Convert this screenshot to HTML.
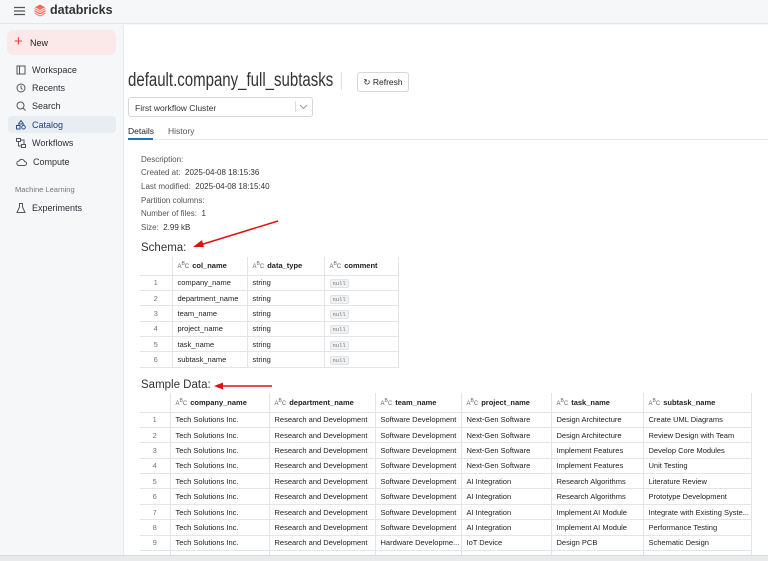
<!DOCTYPE html>
<html><head><meta charset="utf-8"><style>
*{box-sizing:border-box;margin:0;padding:0}
html,body{width:768px;height:561px;overflow:hidden}
body{background:#f6f7f9;font-family:"Liberation Sans",sans-serif;color:#1f2937;position:relative;font-size:9px}
.abs{position:absolute}
.top{left:0;top:0;width:768px;height:24px;background:#f6f7f9;border-bottom:1px solid #e3e5e8}
.main{left:123px;top:25px;width:645px;height:530px;background:#fff;border-left:1px solid #e6e8eb}
.nav{left:8px;height:17px;width:108px;display:flex;align-items:center;padding-left:8px;font-size:9px;color:#2b2f36}
.nav svg{margin-right:6px}
.sel{background:#e8edf4;border-radius:4px;color:#1f3f6b}
table{border-collapse:collapse;position:absolute;font-size:7.5px;color:#222}
td,th{border:1px solid #e3e5e8;padding:0 5px;white-space:nowrap;overflow:hidden;text-align:left;font-weight:normal}
th{font-weight:bold;height:18px;border-top:none}
tr{height:15.4px}
td.n{text-align:center;color:#777;border-left:none}
th.n{border-left:none}
.ac{font-size:6px;color:#666;font-weight:normal;margin-right:3px}
.null{font-family:"Liberation Mono",monospace;font-size:5.5px;background:#f0f1f3;border:1px solid #e2e3e6;border-radius:2px;padding:0 2px;color:#777}
.meta{left:141px;font-size:8px;color:#555}
.meta b{font-weight:normal;color:#333}
.clip{left:0;top:0;width:768px;height:555px;overflow:hidden}
</style></head><body>
<div class="abs top"></div>
<svg class="abs" style="left:14px;top:6px" width="11" height="10"><path d="M0 1.5H11M0 5H11M0 8.5H11" stroke="#555" stroke-width="1.2"/></svg>
<svg class="abs" style="left:34px;top:4px" width="12" height="13" viewBox="0 0 12 13"><path d="M6 0.5L11.5 3.5V9.5L6 12.5L0.5 9.5V3.5Z" fill="#f36a5a"/><path d="M0.5 5.5L6 8.5L11.5 5.5M0.5 8L6 11L11.5 8M0.5 3.5L6 6.5L11.5 3.5" stroke="#fff" stroke-width="0.8" fill="none"/></svg>
<div class="abs" style="left:50px;top:3px;font-size:12.5px;font-weight:bold;color:#333">databricks</div>
<div class="abs" style="left:7px;top:30px;width:109px;height:25px;background:#fbe8e8;border-radius:6px"></div>
<div class="abs" style="left:14px;top:34px;font-size:15px;color:#e8453c;line-height:15px">+</div>
<div class="abs" style="left:30px;top:38px;font-size:9px;color:#222">New</div>
<div class="abs nav" style="top:61px"><svg width="10" height="10"><rect x="1" y="1" width="8" height="8" fill="none" stroke="#555"/><path d="M3.5 1V9" stroke="#555"/></svg>Workspace</div>
<div class="abs nav" style="top:79px"><svg width="10" height="10"><circle cx="5" cy="5" r="4" fill="none" stroke="#555"/><path d="M5 2.5V5L6.5 6.5" stroke="#555" fill="none"/></svg>Recents</div>
<div class="abs nav" style="top:97px"><svg width="10" height="10"><circle cx="4.5" cy="4.5" r="3.5" fill="none" stroke="#555"/><path d="M7 7L9.5 9.5" stroke="#555"/></svg>Search</div>
<div class="abs nav sel" style="top:116px"><svg width="10" height="10"><path d="M5 0.5L7.5 4H2.5Z" fill="none" stroke="#2a4f80"/><rect x="0.5" y="5.5" width="3.5" height="3.5" fill="none" stroke="#2a4f80"/><circle cx="7.5" cy="7.2" r="1.8" fill="none" stroke="#2a4f80"/></svg>Catalog</div>
<div class="abs nav" style="top:134px"><svg width="10" height="10"><rect x="0.5" y="0.5" width="4" height="3" fill="none" stroke="#555"/><rect x="5.5" y="6.5" width="4" height="3" fill="none" stroke="#555"/><path d="M4.5 2H8V6.5M2.5 3.5V8H5.5" stroke="#555" fill="none"/></svg>Workflows</div>
<div class="abs nav" style="top:153px"><svg width="11" height="10"><path d="M2.5 8.5H8.5A2 2 0 0 0 8.5 4.5A3 3 0 0 0 3 4A2.3 2.3 0 0 0 2.5 8.5Z" fill="none" stroke="#555"/></svg>Compute</div>
<div class="abs" style="left:15px;top:185px;font-size:7.5px;color:#777">Machine Learning</div>
<div class="abs nav" style="top:199px"><svg width="10" height="10"><path d="M3 0.5H7M3.5 0.5V4L1 9.5H9L6.5 4V0.5" fill="none" stroke="#555"/></svg>Experiments</div>

<div class="abs main"></div>
<div class="abs" style="left:128px;top:70px;font-size:19px;color:#333;white-space:nowrap;transform:scaleX(0.79);transform-origin:0 0">default.company_full_subtasks</div>
<div class="abs" style="left:341px;top:72px;width:1px;height:18px;background:#e0e0e0"></div>
<div class="abs" style="left:357px;top:72px;width:52px;height:20px;border:1px solid #d5d7da;border-radius:3px;font-size:8.5px;color:#222;display:flex;align-items:center;justify-content:center;background:#fff">&#x21bb;&nbsp;Refresh</div>
<div class="abs" style="left:128px;top:97px;width:185px;height:20px;border:1px solid #d5d7da;border-radius:3px;font-size:8.5px;color:#333;padding:5px 6px">First workflow Cluster</div>
<div class="abs" style="left:295px;top:101px;width:1px;height:11px;background:#ddd"></div>
<svg class="abs" style="left:299px;top:104px" width="9" height="6"><path d="M1 1L4.5 4.5L8 1" stroke="#999" fill="none"/></svg>
<div class="abs" style="left:128px;top:126px;font-size:8.5px;color:#222">Details</div>
<div class="abs" style="left:168px;top:126px;font-size:8.5px;color:#555">History</div>
<div class="abs" style="left:128px;top:139px;width:640px;height:1px;background:#e6e8eb"></div>
<div class="abs" style="left:128px;top:138px;width:25px;height:2px;background:#2272b4"></div>

<div class="abs meta" style="top:155px">Description:</div>
<div class="abs meta" style="top:168px">Created at:&nbsp; <b>2025-04-08 18:15:36</b></div>
<div class="abs meta" style="top:182px">Last modified:&nbsp; <b>2025-04-08 18:15:40</b></div>
<div class="abs meta" style="top:196px">Partition columns:</div>
<div class="abs meta" style="top:209px">Number of files:&nbsp; <b>1</b></div>
<div class="abs meta" style="top:223px">Size:&nbsp; <b>2.99 kB</b></div>

<div class="abs" style="left:141px;top:242px;font-size:11.5px;color:#333">Schema:</div>
<div class="abs" style="left:141px;top:379px;font-size:11.5px;color:#333">Sample Data:</div>
<svg class="abs" style="left:0;top:0" width="768" height="561"><path d="M278 221L200 245" stroke="#e01010" stroke-width="1.5"/><path d="M193 247L202 240L204 247Z" fill="#e01010"/><path d="M272 386H222" stroke="#e01010" stroke-width="1.5"/><path d="M214 386L223 382.5V389.5Z" fill="#e01010"/></svg>

<div class="abs clip">
<table style="left:140px;top:257px;width:258px;table-layout:fixed">
<colgroup><col style="width:32px"><col style="width:75px"><col style="width:77px"><col style="width:74px"></colgroup>
<tr style="height:18px"><th class="n"></th><th><span class="ac">A<sup>B</sup>C</span>col_name</th><th><span class="ac">A<sup>B</sup>C</span>data_type</th><th><span class="ac">A<sup>B</sup>C</span>comment</th></tr>
<tr><td class="n">1</td><td>company_name</td><td>string</td><td><span class="null">null</span></td></tr>
<tr><td class="n">2</td><td>department_name</td><td>string</td><td><span class="null">null</span></td></tr>
<tr><td class="n">3</td><td>team_name</td><td>string</td><td><span class="null">null</span></td></tr>
<tr><td class="n">4</td><td>project_name</td><td>string</td><td><span class="null">null</span></td></tr>
<tr><td class="n">5</td><td>task_name</td><td>string</td><td><span class="null">null</span></td></tr>
<tr><td class="n">6</td><td>subtask_name</td><td>string</td><td><span class="null">null</span></td></tr>
</table>

<table style="left:140px;top:393px;width:611px;table-layout:fixed">
<colgroup><col style="width:30px"><col style="width:99px"><col style="width:106px"><col style="width:86px"><col style="width:90px"><col style="width:92px"><col style="width:108px"></colgroup>
<tr style="height:19px"><th class="n"></th><th><span class="ac">A<sup>B</sup>C</span>company_name</th><th><span class="ac">A<sup>B</sup>C</span>department_name</th><th><span class="ac">A<sup>B</sup>C</span>team_name</th><th><span class="ac">A<sup>B</sup>C</span>project_name</th><th><span class="ac">A<sup>B</sup>C</span>task_name</th><th><span class="ac">A<sup>B</sup>C</span>subtask_name</th></tr>
<tr><td class="n">1</td><td>Tech Solutions Inc.</td><td>Research and Development</td><td>Software Development</td><td>Next-Gen Software</td><td>Design Architecture</td><td>Create UML Diagrams</td></tr>
<tr><td class="n">2</td><td>Tech Solutions Inc.</td><td>Research and Development</td><td>Software Development</td><td>Next-Gen Software</td><td>Design Architecture</td><td>Review Design with Team</td></tr>
<tr><td class="n">3</td><td>Tech Solutions Inc.</td><td>Research and Development</td><td>Software Development</td><td>Next-Gen Software</td><td>Implement Features</td><td>Develop Core Modules</td></tr>
<tr><td class="n">4</td><td>Tech Solutions Inc.</td><td>Research and Development</td><td>Software Development</td><td>Next-Gen Software</td><td>Implement Features</td><td>Unit Testing</td></tr>
<tr><td class="n">5</td><td>Tech Solutions Inc.</td><td>Research and Development</td><td>Software Development</td><td>AI Integration</td><td>Research Algorithms</td><td>Literature Review</td></tr>
<tr><td class="n">6</td><td>Tech Solutions Inc.</td><td>Research and Development</td><td>Software Development</td><td>AI Integration</td><td>Research Algorithms</td><td>Prototype Development</td></tr>
<tr><td class="n">7</td><td>Tech Solutions Inc.</td><td>Research and Development</td><td>Software Development</td><td>AI Integration</td><td>Implement AI Module</td><td>Integrate with Existing Syste...</td></tr>
<tr><td class="n">8</td><td>Tech Solutions Inc.</td><td>Research and Development</td><td>Software Development</td><td>AI Integration</td><td>Implement AI Module</td><td>Performance Testing</td></tr>
<tr><td class="n">9</td><td>Tech Solutions Inc.</td><td>Research and Development</td><td>Hardware Developme...</td><td>IoT Device</td><td>Design PCB</td><td>Schematic Design</td></tr>
<tr><td class="n">10</td><td>Tech Solutions Inc.</td><td>Research and Development</td><td>Hardware Developme...</td><td>IoT Device</td><td>Design PCB</td><td>PCB Layout</td></tr>
</table>
</div>
<div class="abs" style="left:0;top:555px;width:768px;height:6px;background:#e9eaec;border-top:1px solid #d8d9db"></div>
</body></html>
